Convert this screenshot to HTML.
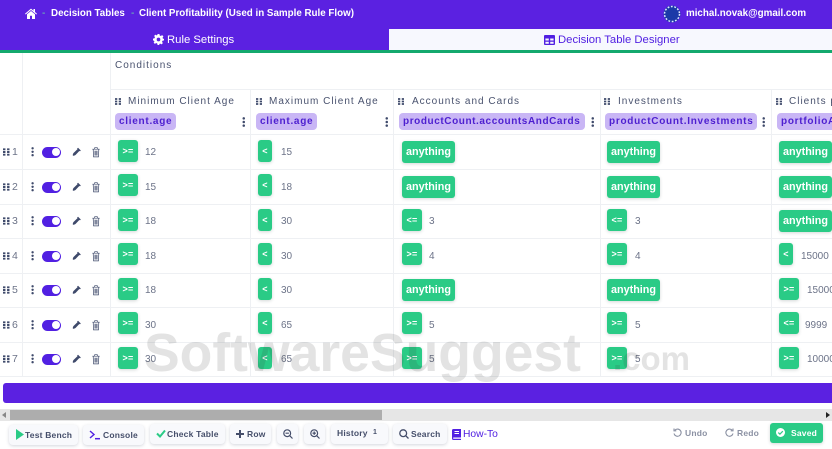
<!DOCTYPE html>
<html><head><meta charset="utf-8"><style>
html,body{margin:0;padding:0}
body{width:832px;height:449px;overflow:hidden;position:relative;background:#fff;font-family:"Liberation Sans",sans-serif;color:#3f4a6b}
div,span,svg{position:absolute}
.t{white-space:nowrap}
.h{top:97px;font-size:10px;line-height:10px;letter-spacing:1px;color:#49526e;white-space:nowrap;font-weight:400}
.p{top:113px;height:17px;background:#c9b6f5;border-radius:4px;color:#4d1fd0;font-size:10px;line-height:17px;font-weight:700;letter-spacing:.72px;white-space:nowrap;overflow:hidden;text-indent:4px}
.r{left:0;width:832px;height:34px;border-bottom:1px solid #eef0f3}
.o{top:5px;height:22px;width:20px;background:#2acb86;color:#fff;font-size:9px;line-height:22px;font-weight:700;text-align:center;border-radius:3px;box-shadow:0 1px 3px rgba(40,60,60,.2);white-space:nowrap;letter-spacing:.2px}
.l{width:14px}
.a{top:6px;height:22px;width:53px;background:#2acb86;color:#fff;font-size:10.8px;line-height:23px;font-weight:700;text-align:center;border-radius:3px;box-shadow:0 1px 3px rgba(40,60,60,.2)}
.v{top:12px;font-size:10px;line-height:12px;color:#6c7388;white-space:nowrap}
.n{top:11px;left:12px;font-size:10.5px;line-height:12px;color:#6c7388}
.g{top:13px;left:3px;width:6.500px;height:8px}
.k{top:12px;left:30.500px;width:3.200px;height:9.500px}
.s{top:11.500px;left:42px;width:19px;height:11px;background:#5120e2;border-radius:6px}
.s:after{content:"";position:absolute;right:1.500px;top:1.500px;width:8px;height:8px;background:#fff;border-radius:50%}
.e{top:12px;left:71.500px;width:9.500px;height:9.500px}
.d{top:12px;left:91.500px;width:8px;height:10.500px}
.vl{width:1px;background:#eef0f3}
.b{background:#f8f9fc;border-radius:4px;box-shadow:0 1px 3px rgba(60,70,100,.22);height:20px;font-size:8.500px;line-height:20px;font-weight:700;letter-spacing:.2px;color:#454e6a;white-space:nowrap}
.b span{white-space:nowrap}
.b svg{top:5px}
.u{font-size:8.500px;line-height:12px;font-weight:700;letter-spacing:.2px}
</style></head><body>
<svg width="0" height="0" style="left:0;top:0"><defs>
<symbol id="grip" viewBox="0 0 8 9"><path fill="#3f4a6b" d="M0 0h3v2.400H0zM5 0h3v2.400H5zM0 3.300h3v2.400H0zM5 3.300h3v2.400H5zM0 6.600h3V9H0zM5 6.600h3V9H5z"/></symbol>
<symbol id="kebab" viewBox="0 0 4 12"><circle cx="2" cy="1.600" r="1.500" fill="#3f4a6b"/><circle cx="2" cy="6" r="1.500" fill="#3f4a6b"/><circle cx="2" cy="10.400" r="1.500" fill="#3f4a6b"/></symbol>
<symbol id="pen" viewBox="0 0 11 11"><path fill="#3f4a6b" d="M7 .8 10.200 4l-1 1-.6-.5-4.400 4.600c-.8.8-1.800.7-2.600 1.200l-.9-.9c.5-.8.4-1.800 1.200-2.600l4.500-4.400-.5-.6z"/></symbol>
<symbol id="trash" viewBox="0 0 9 12"><path fill="none" stroke="#3f4a6b" stroke-width=".8" d="M.3 2.500h8.400M3 2.400V.8h3v1.600M1.300 2.600l.4 8.700h5.600l.4-8.700M3.300 4.300v5.400M4.500 4.300v5.400M5.700 4.300v5.400"/></symbol>
</defs></svg>

<!-- header -->
<div style="left:0;top:0;width:832px;height:50px;background:#5b21e1"></div>
<svg style="left:25px;top:8px" width="12" height="11" viewBox="0 0 12 11"><path fill="#fff" d="M6 .6 0 5.700l.7.8L6 2l5.300 4.500.7-.8-2-1.700V1H8.500v1.700zM2 6.300V11h3V7.700h2V11h3V6.300L6 3z"/></svg>
<div class="t" style="left:42px;top:8px;font-size:10px;line-height:12px;color:#6fd8a5">-</div>
<div class="t" style="left:51px;top:8px;font-size:9.800px;line-height:12px;color:#fff;font-weight:700">Decision Tables</div>
<div class="t" style="left:131px;top:8px;font-size:10px;line-height:12px;color:#6fd8a5">-</div>
<div class="t" style="left:139px;top:8px;font-size:9.800px;line-height:12px;color:#fff;font-weight:700">Client Profitability (Used in Sample Rule Flow)</div>
<svg style="left:663px;top:5px" width="18" height="18" viewBox="0 0 18 18"><circle cx="9" cy="9" r="8.500" fill="#1b3aa8"/><circle cx="9" cy="9" r="7.500" fill="none" stroke="#dfe6ff" stroke-width="1.500" stroke-dasharray="1.800 1.600"/></svg>
<div class="t" style="left:686px;top:8px;font-size:9.800px;line-height:12px;color:#fff;font-weight:700">michal.novak@gmail.com</div>

<!-- tabs -->
<svg style="left:153px;top:34px" width="11" height="11" viewBox="0 0 24 24"><path fill="#fff" d="M10 0h4l.7 3.300 2.300 1 2.900-1.800 2.800 2.800-1.800 2.900 1 2.300L24 10v4l-3.300.7-1 2.300 1.800 2.900-2.800 2.800-2.900-1.800-2.300 1L14 24h-4l-.7-3.300-2.300-1-2.900 1.800-2.800-2.800L3.100 17l-1-2.300L0 14v-4l3.300-.7 1-2.300-1.800-2.900 2.800-2.800L7.200 3.100l2.300-1zM12 8a4 4 0 1 0 0 8 4 4 0 0 0 0-8z"/></svg>
<div class="t" style="left:167px;top:33px;font-size:11.300px;line-height:14px;color:#fff">Rule Settings</div>
<div style="left:389px;top:29px;width:443px;height:21px;background:#f7f8fe"></div>
<svg style="left:544px;top:35px" width="11" height="10" viewBox="0 0 11 10"><path fill="#5120e2" d="M1 0h9a1 1 0 0 1 1 1v8a1 1 0 0 1-1 1H1a1 1 0 0 1-1-1V1a1 1 0 0 1 1-1zm.4 3.500v2h3.400v-2zm4.800 0v2h3.400v-2zm-4.800 3.200v2h3.400v-2zm4.800 0v2h3.400v-2z"/></svg>
<div class="t" style="left:558px;top:33px;font-size:11.300px;line-height:14px;color:#5120e2">Decision Table Designer</div>
<div style="left:0;top:50px;width:832px;height:3px;background:#14a96e"></div>

<!-- table header -->
<div class="vl" style="left:22px;top:53px;height:324px"></div>
<div class="vl" style="left:110px;top:53px;height:324px"></div>
<div class="vl" style="left:250px;top:89px;height:288px"></div>
<div class="vl" style="left:393px;top:89px;height:288px"></div>
<div class="vl" style="left:600px;top:89px;height:288px"></div>
<div class="vl" style="left:771px;top:89px;height:288px"></div>
<div style="left:110px;top:89px;width:722px;height:1px;background:#eef0f3"></div>
<div style="left:0;top:134px;width:832px;height:1px;background:#eef0f3"></div>
<div class="t" style="left:115px;top:60px;font-size:10px;line-height:12px;letter-spacing:1px;color:#49526e">Conditions</div>

<svg style="left:115px;top:98px" width="6" height="7"><use href="#grip"/></svg>
<div class="h" style="left:128px">Minimum Client Age</div>
<div class="p" style="left:115px;width:61px">client.age</div>
<svg style="left:241.500px;top:116.500px" width="3.500" height="10"><use href="#kebab"/></svg>

<svg style="left:256px;top:98px" width="6" height="7"><use href="#grip"/></svg>
<div class="h" style="left:269px">Maximum Client Age</div>
<div class="p" style="left:256px;width:61px">client.age</div>
<svg style="left:385px;top:116.500px" width="3.500" height="10"><use href="#kebab"/></svg>

<svg style="left:398px;top:98px" width="6" height="7"><use href="#grip"/></svg>
<div class="h" style="left:412px">Accounts and Cards</div>
<div class="p" style="left:399px;width:186px;letter-spacing:.58px">productCount.accountsAndCards</div>
<svg style="left:591px;top:116.500px" width="3.500" height="10"><use href="#kebab"/></svg>

<svg style="left:604px;top:98px" width="6" height="7"><use href="#grip"/></svg>
<div class="h" style="left:618px">Investments</div>
<div class="p" style="left:605px;width:152px">productCount.Investments</div>
<svg style="left:762px;top:116.500px" width="3.500" height="10"><use href="#kebab"/></svg>

<svg style="left:776px;top:98px" width="6" height="7"><use href="#grip"/></svg>
<div class="h" style="left:789px">Clients p</div>
<div class="p" style="left:777px;width:60px">portfolioA</div>

<!-- rows -->
<div class="r" style="top:135px">
<svg class="g"><use href="#grip"/></svg><div class="n">1</div><svg class="k"><use href="#kebab"/></svg><div class="s"></div><svg class="e"><use href="#pen"/></svg><svg class="d"><use href="#trash"/></svg>
<div class="o" style="left:118px">&gt;=</div><div class="v" style="left:145px">12</div>
<div class="o l" style="left:258px">&lt;</div><div class="v" style="left:281px">15</div>
<div class="a" style="left:402px">anything</div>
<div class="a" style="left:607px">anything</div>
<div class="a" style="left:779px">anything</div>
</div>
<div class="r" style="top:170px">
<svg class="g"><use href="#grip"/></svg><div class="n">2</div><svg class="k"><use href="#kebab"/></svg><div class="s"></div><svg class="e"><use href="#pen"/></svg><svg class="d"><use href="#trash"/></svg>
<div class="o" style="left:118px;top:4px">&gt;=</div><div class="v" style="left:145px">15</div>
<div class="o l" style="left:258px;top:4px">&lt;</div><div class="v" style="left:281px">18</div>
<div class="a" style="left:402px">anything</div>
<div class="a" style="left:607px">anything</div>
<div class="a" style="left:779px">anything</div>
</div>
<div class="r" style="top:204px">
<svg class="g"><use href="#grip"/></svg><div class="n">3</div><svg class="k"><use href="#kebab"/></svg><div class="s"></div><svg class="e"><use href="#pen"/></svg><svg class="d"><use href="#trash"/></svg>
<div class="o" style="left:118px">&gt;=</div><div class="v" style="left:145px">18</div>
<div class="o l" style="left:258px">&lt;</div><div class="v" style="left:281px">30</div>
<div class="o" style="left:402px">&lt;=</div><div class="v" style="left:429px">3</div>
<div class="o" style="left:607px">&lt;=</div><div class="v" style="left:635px">3</div>
<div class="a" style="left:779px">anything</div>
</div>
<div class="r" style="top:239px">
<svg class="g"><use href="#grip"/></svg><div class="n">4</div><svg class="k"><use href="#kebab"/></svg><div class="s"></div><svg class="e"><use href="#pen"/></svg><svg class="d"><use href="#trash"/></svg>
<div class="o" style="left:118px;top:4px">&gt;=</div><div class="v" style="left:145px">18</div>
<div class="o l" style="left:258px;top:4px">&lt;</div><div class="v" style="left:281px">30</div>
<div class="o" style="left:402px;top:4px">&gt;=</div><div class="v" style="left:429px">4</div>
<div class="o" style="left:607px;top:4px">&gt;=</div><div class="v" style="left:635px">4</div>
<div class="o l" style="left:779px;top:4px">&lt;</div><div class="v" style="left:801px">15000</div>
</div>
<div class="r" style="top:273px">
<svg class="g"><use href="#grip"/></svg><div class="n">5</div><svg class="k"><use href="#kebab"/></svg><div class="s"></div><svg class="e"><use href="#pen"/></svg><svg class="d"><use href="#trash"/></svg>
<div class="o" style="left:118px">&gt;=</div><div class="v" style="left:145px">18</div>
<div class="o l" style="left:258px">&lt;</div><div class="v" style="left:281px">30</div>
<div class="a" style="left:402px">anything</div>
<div class="a" style="left:607px">anything</div>
<div class="o" style="left:779px">&gt;=</div><div class="v" style="left:807px">15000</div>
</div>
<div class="r" style="top:308px">
<svg class="g"><use href="#grip"/></svg><div class="n">6</div><svg class="k"><use href="#kebab"/></svg><div class="s"></div><svg class="e"><use href="#pen"/></svg><svg class="d"><use href="#trash"/></svg>
<div class="o" style="left:118px;top:4px">&gt;=</div><div class="v" style="left:145px">30</div>
<div class="o l" style="left:258px;top:4px">&lt;</div><div class="v" style="left:281px">65</div>
<div class="o" style="left:402px;top:4px">&gt;=</div><div class="v" style="left:429px">5</div>
<div class="o" style="left:607px;top:4px">&gt;=</div><div class="v" style="left:635px">5</div>
<div class="o" style="left:779px;top:4px">&lt;=</div><div class="v" style="left:805px">9999</div>
</div>
<div class="r" style="top:342px">
<svg class="g"><use href="#grip"/></svg><div class="n">7</div><svg class="k"><use href="#kebab"/></svg><div class="s"></div><svg class="e"><use href="#pen"/></svg><svg class="d"><use href="#trash"/></svg>
<div class="o" style="left:118px">&gt;=</div><div class="v" style="left:145px">30</div>
<div class="o l" style="left:258px">&lt;</div><div class="v" style="left:281px">65</div>
<div class="o" style="left:402px">&gt;=</div><div class="v" style="left:429px">5</div>
<div class="o" style="left:607px">&gt;=</div><div class="v" style="left:635px">5</div>
<div class="o" style="left:779px">&gt;=</div><div class="v" style="left:807px">10000</div>
</div>

<!-- bar -->
<div style="left:3px;top:383px;width:829px;height:20px;background:#5b21e1;border-radius:3px 0 0 3px"></div>

<!-- scrollbar -->
<div style="left:0;top:409px;width:832px;height:12px;background:#e6e6e6"></div>
<div style="left:10px;top:410px;width:372px;height:10px;background:#adadad"></div>
<svg style="left:2px;top:412px" width="5" height="6"><path fill="#888" d="M4 0v6L0 3z"/></svg>
<svg style="left:826px;top:412px" width="5" height="6"><path fill="#222" d="M0 0v6l4-3z"/></svg>

<!-- footer -->
<div class="b" style="left:9px;top:425px;width:69px">
<svg style="left:6px;top:4px" width="9" height="11"><path fill="#2acb86" d="M1 0l8 5.500L1 11z"/></svg><span style="left:16px">Test Bench</span></div>
<div class="b" style="left:83px;top:425px;width:61px">
<svg style="left:6px;top:5px" width="12" height="10" fill="none"><path stroke="#5120e2" stroke-width="1.400" d="M1 1l4 3.500L1 8"/><path stroke="#5120e2" stroke-width="1.500" d="M6 8.700h5"/></svg><span style="left:20px">Console</span></div>
<div class="b" style="left:150px;top:424px;width:75px">
<svg style="left:6px;top:5px" width="10" height="9" fill="none"><path stroke="#2acb86" stroke-width="2" d="M1 4.500l3 3 5-6"/></svg><span style="left:17px">Check Table</span></div>
<div class="b" style="left:230px;top:424px;width:41px">
<svg style="left:6px;top:6px" width="8" height="8"><path fill="#454e6a" d="M3 0h2v3h3v2H5v3H3V5H0V3h3z"/></svg><span style="left:17px">Row</span></div>
<div class="b" style="left:277px;top:424px;width:21px">
<svg style="left:6px;top:5px" width="10" height="10" fill="none" stroke="#454e6a" stroke-width="1.200"><circle cx="4.200" cy="4.200" r="3.400"/><path d="M6.800 6.800 9.500 9.500M2.500 4.200h3.400"/></svg></div>
<div class="b" style="left:304px;top:424px;width:21px">
<svg style="left:6px;top:5px" width="10" height="10" fill="none" stroke="#454e6a" stroke-width="1.200"><circle cx="4.200" cy="4.200" r="3.400"/><path d="M6.800 6.800 9.500 9.500M2.500 4.200h3.400M4.200 2.500v3.400"/></svg></div>
<div class="b" style="left:331px;top:424px;width:57px"><span style="left:6px;top:-1px">History</span><span style="left:42px;top:-1px;font-size:7px">1</span></div>
<div class="b" style="left:393px;top:424px;width:54px">
<svg style="left:6px;top:5px" width="10" height="10" fill="none" stroke="#454e6a" stroke-width="1.300"><circle cx="4.200" cy="4.200" r="3.400"/><path d="M6.800 6.800 9.500 9.500"/></svg><span style="left:18px">Search</span></div>
<svg style="left:452px;top:429px" width="9" height="11"><path fill="#5120e2" d="M1.500 0H9v8.500H1.800c-.9 0-.9 1.300 0 1.300H9V11H1.500A1.500 1.500 0 0 1 0 9.500v-8A1.500 1.500 0 0 1 1.500 0zM2.500 2v1h4.500V2zm0 2v1h4.500V4z"/></svg>
<div class="t" style="left:463px;top:428px;font-size:10.300px;line-height:14px;color:#5120e2">How-To</div>
<svg style="left:673px;top:428px" width="9" height="9" fill="none" stroke="#8b91a3" stroke-width="1.100"><path d="M1.800 2.300A3.600 3.600 0 1 1 1 5.500"/><path d="M1 .5v2.300h2.300"/></svg>
<div class="t u" style="left:685px;top:427px;color:#8b91a3">Undo</div>
<svg style="left:725px;top:428px" width="9" height="9" fill="none" stroke="#8b91a3" stroke-width="1.100"><path d="M7.200 2.300A3.600 3.600 0 1 0 8 5.500"/><path d="M8 .5v2.300H5.700"/></svg>
<div class="t u" style="left:737px;top:427px;color:#8b91a3">Redo</div>
<div style="left:770px;top:423px;width:53px;height:20px;background:#2acb86;border-radius:3px;box-shadow:0 1px 3px rgba(40,60,60,.2)"></div>
<svg style="left:776px;top:428px" width="9" height="9"><circle cx="4.500" cy="4.500" r="4.500" fill="#fff"/><path d="M2.300 4.600l1.600 1.600 2.900-3" fill="none" stroke="#2acb86" stroke-width="1.200"/></svg>
<div class="t u" style="left:791px;top:427px;color:#fff">Saved</div>

<!-- watermark -->
<div class="t" style="left:144px;top:324px;font-size:53.500px;line-height:60px;font-weight:700;color:rgba(60,60,60,.14)">SoftwareSuggest</div>
<div class="t" style="left:613px;top:339px;font-size:33px;line-height:40px;font-weight:700;color:rgba(60,60,60,.14)">.com</div>
</body></html>
